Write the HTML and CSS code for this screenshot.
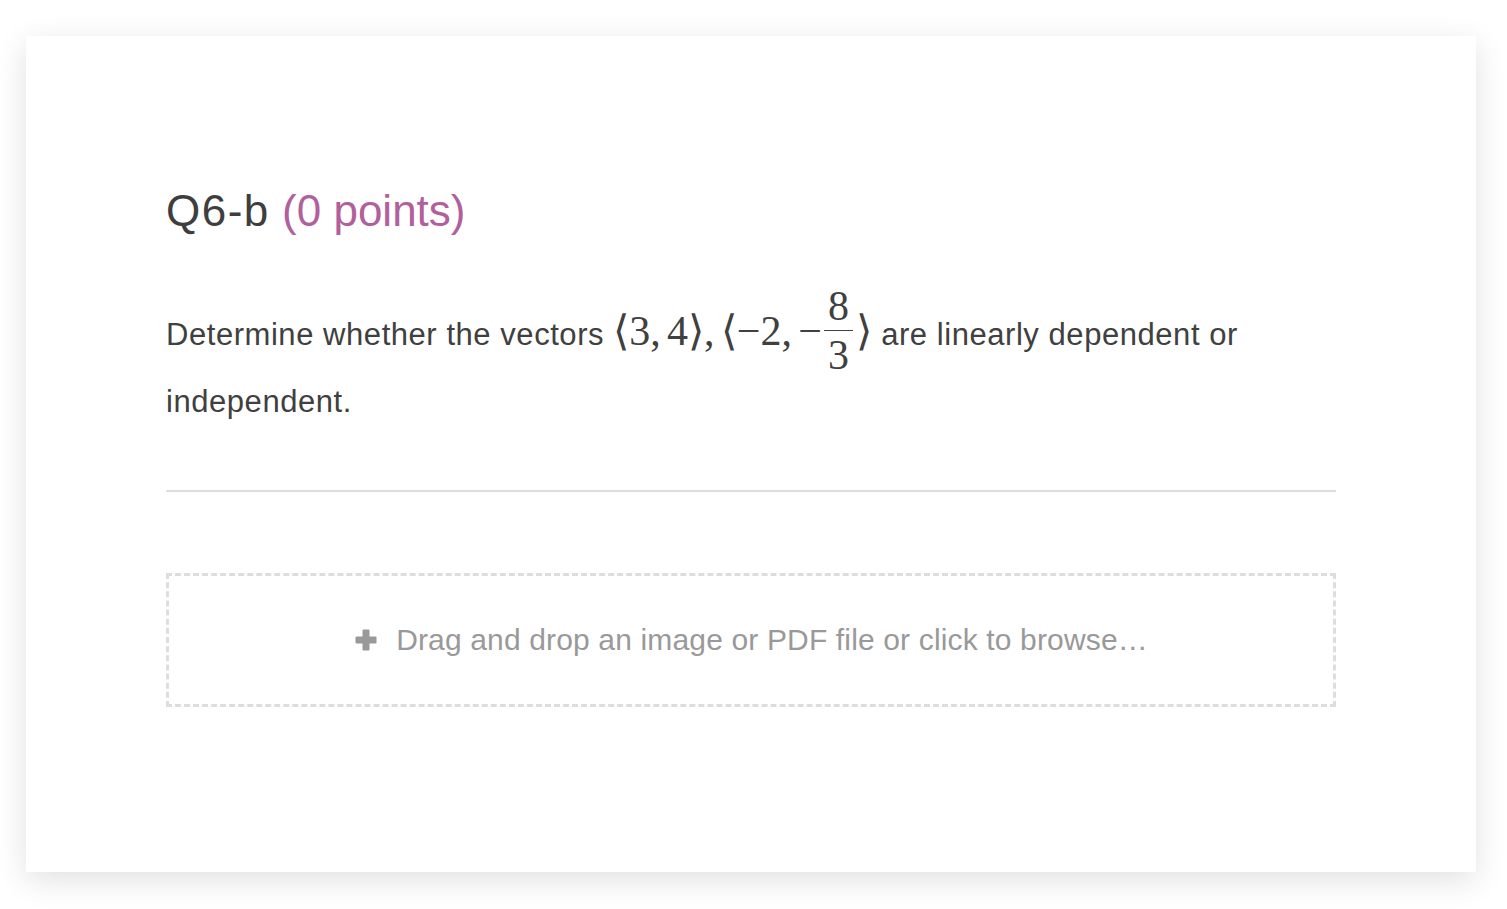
FILE: index.html
```html
<!DOCTYPE html>
<html>
<head>
<meta charset="utf-8">
<link rel="stylesheet" href="styles.css">
</head>
<body>
<div class="card">
  <h1 class="title"><span class="qid">Q6-b</span> <span class="points">(0 points)</span></h1>
  <p class="question">Determine whether the vectors <span class="math">⟨3,<span class="th"></span>4⟩,<span class="th"></span>⟨−2,<span class="th"></span>−<span class="frac"><span class="num">8</span><span class="den">3</span></span>⟩</span> are linearly dependent or independent.</p>
  <hr class="rule">
  <div class="drop">
    <svg class="plus" width="24" height="24" viewBox="0 0 24 24"><path d="M9.5 2.5h5v7h7v5h-7v7h-5v-7h-7v-5h7z" fill="#999" stroke="#999" stroke-width="2" stroke-linejoin="round"/></svg>
    <span>Drag and drop an image or PDF file or click to browse…</span>
  </div>
</div>
</body>
</html>
```
FILE: styles.css
```css
html, body {
  margin: 0;
  padding: 0;
  background: #fff;
}
body {
  padding: 36px 31px 37px 26px;
  font-family: "Liberation Sans", Arial, sans-serif;
  color: #404040;
}
.card {
  width: 1450px;
  height: 836px;
  box-sizing: border-box;
  padding: 145px 140px 0 140px;
  background: #fff;
  box-shadow: 0 8px 30px rgba(0,0,0,0.12);
}
.title {
  margin: 0;
  font-weight: normal;
  font-size: 44px;
  line-height: 60px;
  color: #3e3e3e;
}
.qid {
  letter-spacing: 1.5px;
}
.points {
  color: #b15f9d;
}
.question {
  margin: 60px 0 0 0;
  font-size: 31px;
  letter-spacing: 0.55px;
  line-height: 67px;
}
.math {
  font-family: "Liberation Serif", "Times New Roman", serif;
  font-size: 42px;
  letter-spacing: 0;
  line-height: 1;
  white-space: nowrap;
}
.th {
  display: inline-block;
  width: 0.15em;
}
.frac {
  display: inline-flex;
  flex-direction: column;
  align-items: center;
  vertical-align: 25px;
  line-height: 1;
  margin: -20px 3px -10px 2px;
}
.num {
  padding: 0 4px 3px;
  border-bottom: 1.5px solid #404040;
}
.den {
  padding-top: 3px;
}
.rule {
  margin: 55px 0 0 0;
  border: 0;
  border-top: 2px solid #ddd;
}
.drop {
  margin-top: 81px;
  height: 134px;
  box-sizing: border-box;
  border: 3px dashed #ddd;
  display: flex;
  align-items: center;
  justify-content: center;
  gap: 18px;
  color: #999;
  font-size: 30px;
  letter-spacing: 0.15px;
}
.plus {
  display: block;
}
```
